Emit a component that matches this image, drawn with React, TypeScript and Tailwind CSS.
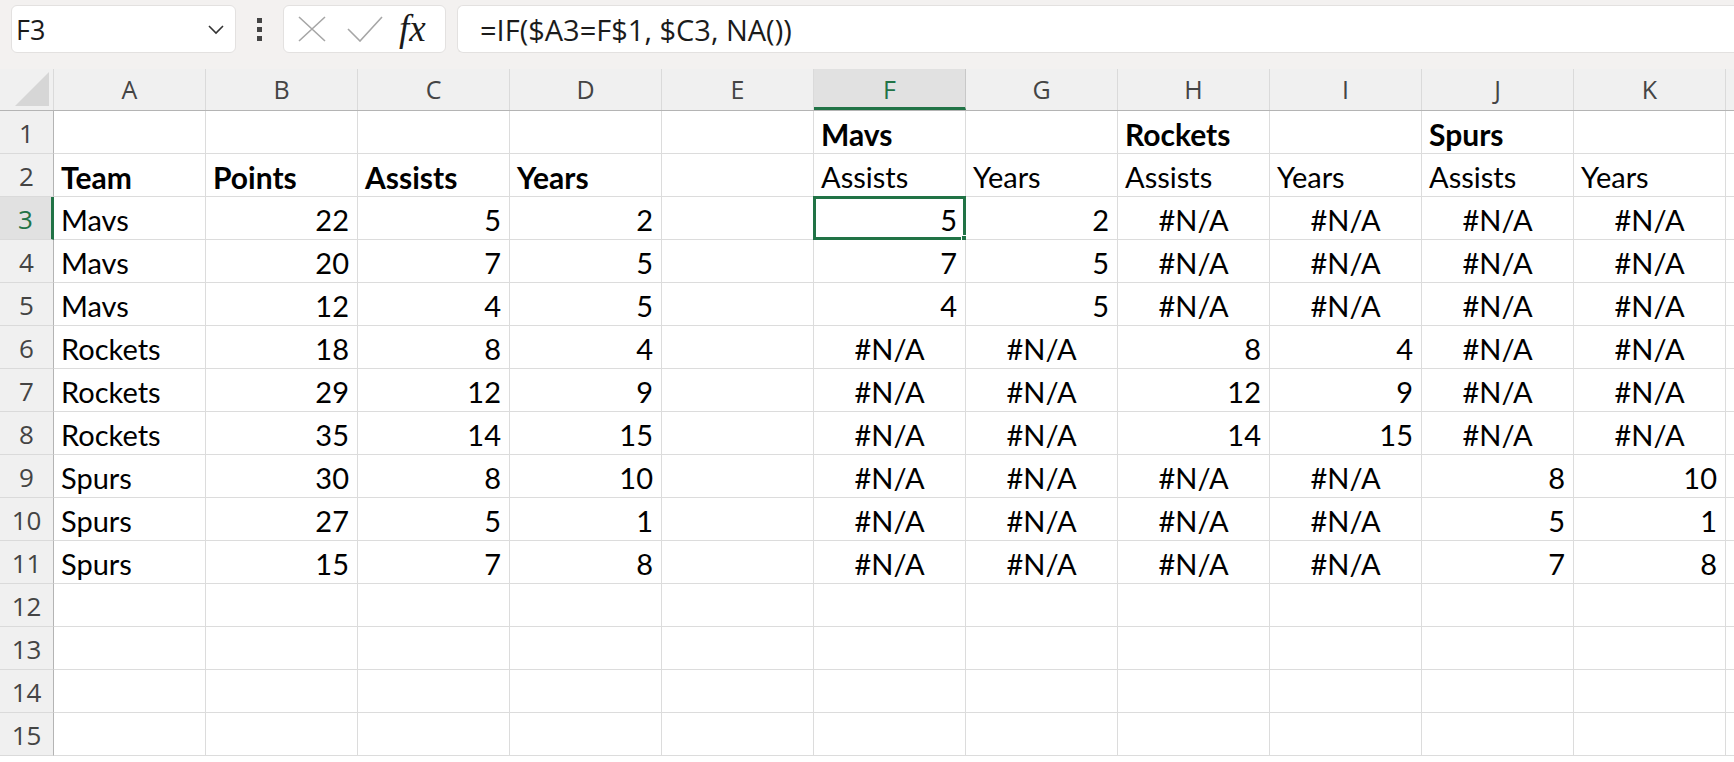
import React from "react";

const COLS = ["A", "B", "C", "D", "E", "F", "G", "H", "I", "J", "K"];
const NA = "#N/A";

type Cell = { v: string; b?: boolean; num?: boolean };

const t = (v: string, b = false): Cell => ({ v, b });
const n = (v: string): Cell => ({ v, num: true });
const e = (): Cell => ({ v: "" });
const na = (): Cell => ({ v: NA });

const rows: Cell[][] = [
  [e(), e(), e(), e(), e(), t("Mavs", true), e(), t("Rockets", true), e(), t("Spurs", true), e()],
  [t("Team", true), t("Points", true), t("Assists", true), t("Years", true), e(), t("Assists"), t("Years"), t("Assists"), t("Years"), t("Assists"), t("Years")],
  [t("Mavs"), n("22"), n("5"), n("2"), e(), n("5"), n("2"), na(), na(), na(), na()],
  [t("Mavs"), n("20"), n("7"), n("5"), e(), n("7"), n("5"), na(), na(), na(), na()],
  [t("Mavs"), n("12"), n("4"), n("5"), e(), n("4"), n("5"), na(), na(), na(), na()],
  [t("Rockets"), n("18"), n("8"), n("4"), e(), na(), na(), n("8"), n("4"), na(), na()],
  [t("Rockets"), n("29"), n("12"), n("9"), e(), na(), na(), n("12"), n("9"), na(), na()],
  [t("Rockets"), n("35"), n("14"), n("15"), e(), na(), na(), n("14"), n("15"), na(), na()],
  [t("Spurs"), n("30"), n("8"), n("10"), e(), na(), na(), na(), na(), n("8"), n("10")],
  [t("Spurs"), n("27"), n("5"), n("1"), e(), na(), na(), na(), na(), n("5"), n("1")],
  [t("Spurs"), n("15"), n("7"), n("8"), e(), na(), na(), na(), na(), n("7"), n("8")],
  [e(), e(), e(), e(), e(), e(), e(), e(), e(), e(), e()],
  [e(), e(), e(), e(), e(), e(), e(), e(), e(), e(), e()],
  [e(), e(), e(), e(), e(), e(), e(), e(), e(), e(), e()],
  [e(), e(), e(), e(), e(), e(), e(), e(), e(), e(), e()],
];

const cellFont = { fontFamily: "Lato, 'Liberation Sans', sans-serif" };
const uiFont = { fontFamily: "'Open Sans', 'Noto Sans', sans-serif" };

function FormulaBar() {
  return (
    <div className="flex h-[69px] items-start bg-[#f3f1f0] pt-[5px]" style={uiFont}>
      <div className="ml-[11px] flex h-[48px] w-[225px] items-center justify-between rounded-[6px] border border-[#e3e1e0] bg-white pl-[4px] pr-[10px]">
        <span className="text-[27px] leading-none text-[#1b1b1b]">F3</span>
        <svg width="18" height="12" viewBox="0 0 18 12" fill="none">
          <path d="M2 3 L9 10 L16 3" stroke="#333" strokeWidth="1.6" />
        </svg>
      </div>
      <div className="flex h-[48px] w-[47px] flex-col items-center justify-center gap-[4px]">
        <div className="h-[5px] w-[5px] bg-[#444]" />
        <div className="h-[5px] w-[5px] bg-[#444]" />
        <div className="h-[5px] w-[5px] bg-[#444]" />
      </div>
      <div className="flex h-[48px] w-[163px] items-center rounded-[6px] border border-[#e3e1e0] bg-white">
        <svg className="ml-[13px]" width="30" height="26" viewBox="0 0 30 26" fill="none">
          <path d="M2 1 L28 25 M28 1 L2 25" stroke="#a6a6a6" strokeWidth="1.6" />
        </svg>
        <svg className="ml-[20px]" width="36" height="26" viewBox="0 0 36 26" fill="none">
          <path d="M1 13 L13 25 L35 1" stroke="#a6a6a6" strokeWidth="1.6" />
        </svg>
        <span
          className="ml-[16px] -mt-[2px] text-[37px] italic leading-none text-[#1a1a1a]"
          style={{ fontFamily: "'Liberation Serif', 'DejaVu Serif', serif" }}
        >
          fx
        </span>
      </div>
      <div className="ml-[11px] flex h-[48px] flex-1 items-center rounded-l-[6px] border border-r-0 border-[#e3e1e0] bg-white pl-[22px]">
        <span className="text-[29px] leading-none text-[#1b1b1b]">=IF($A3=F$1, $C3, NA())</span>
      </div>
    </div>
  );
}

function ColumnHeader() {
  return (
    <div className="flex h-[42px] border-b border-[#b4b4b4] bg-[#f0f0f0]" style={uiFont}>
      <div className="relative w-[54px] shrink-0 border-r border-[#dadada]">
        <div className="absolute bottom-[4px] right-[4px] h-0 w-0 border-b-[34px] border-l-[34px] border-b-[#d6d6d6] border-l-transparent" />
      </div>
      {COLS.map((c) =>
        c === "F" ? (
          <div
            key={c}
            className="flex w-[152px] shrink-0 items-center justify-center border-r border-[#c8c8c8] border-b-[3px] border-b-[#217346] bg-[#e1e1e1] pt-[3px] text-[25px] text-[#217346]"
          >
            {c}
          </div>
        ) : (
          <div
            key={c}
            className="flex w-[152px] shrink-0 items-center justify-center border-r border-[#dadada] text-[25px] text-[#444]"
          >
            {c}
          </div>
        )
      )}
      <div className="flex-1" />
    </div>
  );
}

function GridRow({ idx, cells }: { idx: number; cells: Cell[] }) {
  const active = idx === 3;
  return (
    <div className="flex h-[43px]">
      <div
        className={
          active
            ? "flex w-[54px] shrink-0 items-center justify-center border-b border-[#dadada] border-r-[3px] border-r-[#217346] bg-[#e1e1e1] pt-[2px] text-[26px] text-[#217346]"
            : "flex w-[54px] shrink-0 items-center justify-center border-b border-r border-[#dadada] border-r-[#b4b4b4] bg-[#f0f0f0] pt-[2px] text-[26px] text-[#444]"
        }
        style={uiFont}
      >
        {idx}
      </div>
      {cells.map((c, i) => {
        const selected = active && i === 5;
        const align = c.v === NA ? "justify-center" : c.num ? "justify-end pr-[8px]" : "justify-start pl-[7px]";
        const size = c.b ? "text-[30px] font-bold" : "text-[29px]";
        return (
          <div
            key={i}
            className={`relative flex w-[152px] shrink-0 items-end border-b border-r border-[#dcdcdc] bg-white pb-[4px] leading-[30px] text-black ${align} ${size}`}
            style={cellFont}
          >
            {c.v}
            {selected && (
              <>
                <div className="pointer-events-none absolute -left-[1px] -top-[1px] h-[44px] w-[153px] border-[3px] border-[#217346]" />
                <div className="absolute -bottom-[4px] -right-[4px] h-[8px] w-[8px] border border-white bg-[#217346]" />
              </>
            )}
          </div>
        );
      })}
      <div className="flex-1 border-b border-[#dcdcdc] bg-white" />
    </div>
  );
}

export default function App() {
  return (
    <div className="h-[762px] w-[1734px] overflow-hidden bg-white">
      <FormulaBar />
      <ColumnHeader />
      {rows.map((r, i) => (
        <GridRow key={i} idx={i + 1} cells={r} />
      ))}
    </div>
  );
}
